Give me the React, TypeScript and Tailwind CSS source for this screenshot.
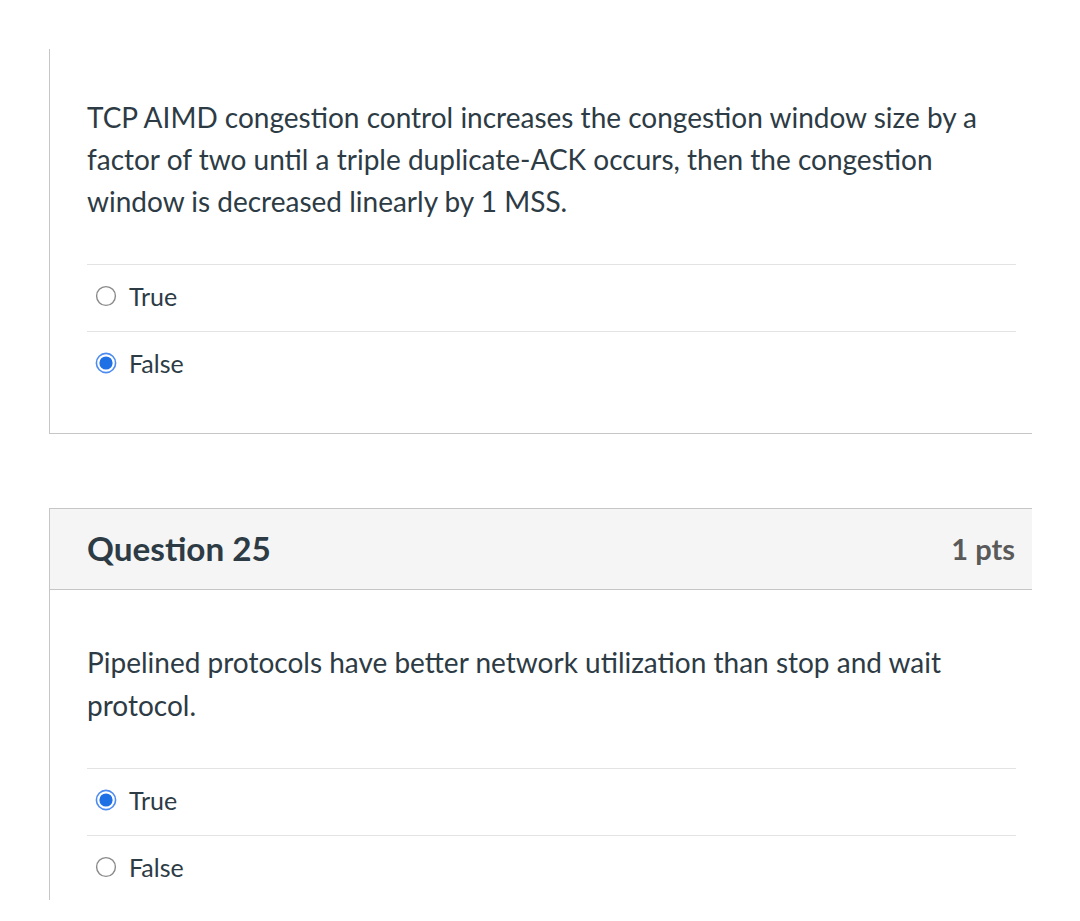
import React from 'react';

const TEXT = '#2d3b45';

const Radio = ({ checked }: { checked: boolean }) =>
  checked ? (
    <svg width="22" height="22" viewBox="0 0 22 22" className="shrink-0">
      <circle cx="11" cy="11" r="9.6" fill="white" stroke="#4d8bf0" strokeWidth="1.6" />
      <circle cx="11" cy="11" r="6.6" fill="#1f6fe5" />
    </svg>
  ) : (
    <svg width="22" height="22" viewBox="0 0 22 22" className="shrink-0">
      <circle cx="11" cy="11" r="9.4" fill="white" stroke="#8a8a8a" strokeWidth="1.4" />
    </svg>
  );

const Answers = ({ selected }: { selected: 'True' | 'False' }) => (
  <ul className="w-[929px] border-t border-[#e3e3e3]">
    {(['True', 'False'] as const).map((label, i) => (
      <li
        key={label}
        className={`flex items-center gap-[12px] h-[67px] pl-[8px] pb-[5px] ${i === 0 ? 'border-b border-[#e3e3e3]' : ''}`}
      >
        <Radio checked={label === selected} />
        <span className="text-[25px] leading-[30px]" style={{ color: TEXT }}>
          {label}
        </span>
      </li>
    ))}
  </ul>
);

export default function App() {
  return (
    <div className="bg-white min-h-[921px] pl-[49px] pt-[49px]" style={{ fontFamily: 'Lato, "Noto Sans", sans-serif' }}>
      {/* previous question body */}
      <section className="w-[983px] h-[385px] border-l border-b border-[#c6c6c6] pl-[37px] pt-[47px]">
        <p className="w-[929px] text-[28px] leading-[42px]" style={{ color: TEXT }}>
          TCP AIMD congestion control increases the congestion window size by a factor of two until a triple duplicate-ACK occurs, then the congestion window is decreased linearly by 1 MSS.
        </p>
        <div className="mt-[42px]">
          <Answers selected="False" />
        </div>
      </section>

      {/* Question 25 */}
      <section className="mt-[74px] w-[983px] h-[392px] border-l border-t border-[#c6c6c6] overflow-hidden">
        <header className="h-[81px] bg-[#f5f5f5] border-b border-[#c6c6c6] flex items-center justify-between pl-[37px] pr-[17px]">
          <h2 className="text-[33.3px] font-bold" style={{ color: TEXT }}>
            Question 25
          </h2>
          <span className="text-[29px] font-bold text-[#5a5a5a]">1 pts</span>
        </header>
        <div className="pl-[37px] pt-[51px]">
          <p className="w-[929px] text-[28px] leading-[43px]" style={{ color: TEXT }}>
            Pipelined protocols have better network utilization than stop and wait protocol.
          </p>
          <div className="mt-[41px]">
            <Answers selected="True" />
          </div>
        </div>
      </section>
    </div>
  );
}
